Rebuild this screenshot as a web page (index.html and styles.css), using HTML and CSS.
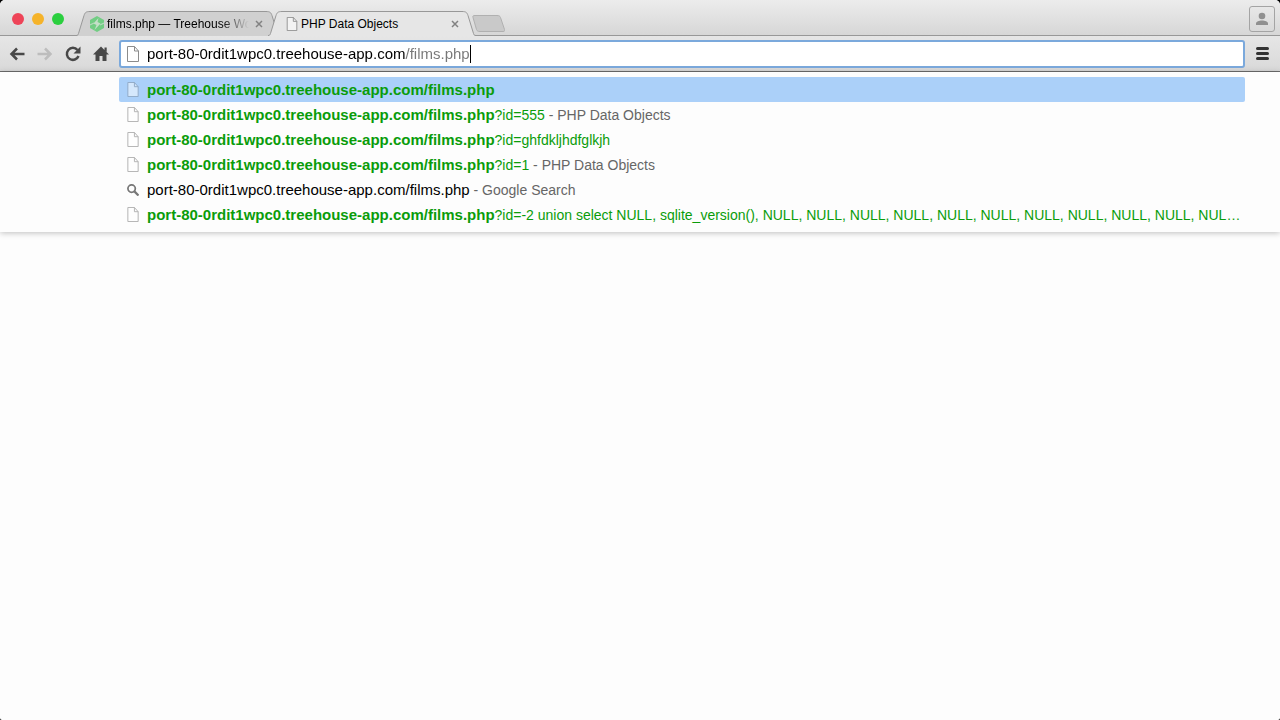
FILE: index.html
```html
<!DOCTYPE html>
<html lang="en">
<head>
  <meta charset="UTF-8" />
  <meta name="viewport" content="width=device-width, initial-scale=1.0"/>
  <title>PHP Data Objects</title>
  <link rel="stylesheet" href="styles.css">
</head>
<body>
  <!-- shared icons -->
  <svg class="sprite" aria-hidden="true">
    <symbol id="page" viewBox="0 0 12 16">
      <path d="M.5.5H7.500l4 4.500v10.500H.5z" fill="#fff" fill-opacity=".5" stroke="currentColor"/>
      <path d="M7.500.5v4.500H11.500" fill="none" stroke="currentColor"/>
    </symbol>
    <symbol id="close" viewBox="0 0 8 8">
      <path d="M1 1l6 6M7 1L1 7" stroke="currentColor" stroke-width="1.500"/>
    </symbol>
    <symbol id="edge-left" viewBox="0 0 14 25">
      <path d="M0 25C1.500 25 2 24 2.500 22.500L8 4.500C9 1.500 10 .5 14 .5V25z" fill="var(--tab-bg)"/>
      <path d="M0 24.500C1.500 24.500 2 24 2.500 22.500L8 4.500C9 1.500 10 .5 14 .5" fill="none" stroke="#989898"/>
    </symbol>
  </svg>

  <div class="window">
    <header class="tab-strip">
      <div class="lights">
        <button class="light red" aria-label="Close window"></button>
        <button class="light yellow" aria-label="Minimize window"></button>
        <button class="light green" aria-label="Zoom window"></button>
      </div>

      <nav class="tabs" aria-label="Tabs">
        <div class="tab">
          <svg class="edge"><use href="#edge-left"/></svg>
          <div class="tab-body">
            <svg class="logo" viewBox="0 0 14 16">
              <path d="M7 0l7 4v8l-7 4-7-4V4z" fill="#72cd84"/>
              <path d="M8.500 2L3.500 7.500 6.500 9l-2 5 6-6.500-3-1.500z" fill="#c4dfc8"/>
              <path d="M0 9l4-2M14 7l-4 2" stroke="#b5d9bb" stroke-width="1.200"/>
            </svg>
            <a class="tab-title fade" href="#">films.php — Treehouse Workspaces</a>
            <button class="tab-close" aria-label="Close tab"><svg><use href="#close"/></svg></button>
          </div>
          <svg class="edge right"><use href="#edge-left"/></svg>
        </div>
        <div class="tab active">
          <svg class="edge"><use href="#edge-left"/></svg>
          <div class="tab-body">
            <svg class="page-icon"><use href="#page"/></svg>
            <a class="tab-title" href="#" aria-current="page">PHP Data Objects</a>
            <button class="tab-close" aria-label="Close tab"><svg><use href="#close"/></svg></button>
          </div>
          <svg class="edge right"><use href="#edge-left"/></svg>
        </div>
        <button class="new-tab" aria-label="New tab">
          <svg viewBox="0 0 34 17"><path d="M4 .5h22c2 0 3 .5 3.500 2l4 12c.5 1.500 0 2-1.500 2H9c-2 0-3-.5-3.500-2l-3.500-12C1.500 1 2 .5 4 .5z" fill="#c9c9c9" stroke="#b0b0b0"/></svg>
        </button>
      </nav>

      <button class="profile" aria-label="Profile">
        <svg viewBox="0 0 14 14"><circle cx="7" cy="4" r="3.300"/><path d="M1 13v-1.500C1 9.500 4 8.500 7 8.500s6 1 6 3V13z"/></svg>
      </button>
    </header>

    <div class="toolbar">
      <button class="tool" aria-label="Back">
        <svg viewBox="0 0 16 16"><path d="M15.500 8H2.500M8 2.500L2.500 8 8 13.500" fill="none" stroke="#484848" stroke-width="2.500"/></svg>
      </button>
      <button class="tool" aria-label="Forward" disabled>
        <svg viewBox="0 0 16 16"><path d="M.5 8h13M8 2.500L13.500 8 8 13.500" fill="none" stroke="#bdbdbd" stroke-width="2.500"/></svg>
      </button>
      <button class="tool" aria-label="Reload">
        <svg viewBox="0 0 16 16"><path d="M12.500 4A6 6 0 1 0 13.500 10" fill="none" stroke="#484848" stroke-width="2.500"/><path d="M15.500.5v7H8.500z" fill="#484848"/></svg>
      </button>
      <button class="tool" aria-label="Home">
        <svg viewBox="0 0 16 16"><path d="M8 .5l8 8h-2.500V15H9.500v-5h-3v5h-4V8.500H0l8-8zM11.500 1.500h2.200V6l-2.200-2z" fill="#484848"/></svg>
      </button>

      <form class="omnibox">
        <svg class="page-icon"><use href="#page"/></svg>
        <input class="address" type="text" aria-label="Address" value="port-80-0rdit1wpc0.treehouse-app.com/films.php" spellcheck="false">
        <span class="caret"></span>
      </form>

      <button class="menu" aria-label="Menu">
        <svg viewBox="0 0 13 13"><path d="M1.500 1.500h10M1.500 6.500h10M1.500 11.500h10" stroke="#333" stroke-width="3" stroke-linecap="round"/></svg>
      </button>
    </div>

    <ul class="suggestions">
      <li><a class="row selected" href="#">
        <svg class="page-icon"><use href="#page"/></svg>
        <span class="text"><b>port-80-0rdit1wpc0.treehouse-app.com/films.php</b></span>
      </a></li>
      <li><a class="row" href="#">
        <svg class="page-icon"><use href="#page"/></svg>
        <span class="text"><b>port-80-0rdit1wpc0.treehouse-app.com/films.php</b>?id=555<span class="note"> - PHP Data Objects</span></span>
      </a></li>
      <li><a class="row" href="#">
        <svg class="page-icon"><use href="#page"/></svg>
        <span class="text"><b>port-80-0rdit1wpc0.treehouse-app.com/films.php</b>?id=ghfdkljhdfglkjh</span>
      </a></li>
      <li><a class="row" href="#">
        <svg class="page-icon"><use href="#page"/></svg>
        <span class="text"><b>port-80-0rdit1wpc0.treehouse-app.com/films.php</b>?id=1<span class="note"> - PHP Data Objects</span></span>
      </a></li>
      <li><a class="row" href="#">
        <svg class="search-icon" viewBox="0 0 13 13"><circle cx="5" cy="5" r="4" fill="none" stroke="#777" stroke-width="1.900"/><path d="M8 8l4.500 4.500" stroke="#777" stroke-width="2.400"/></svg>
        <span class="text"><span class="query">port-80-0rdit1wpc0.treehouse-app.com/films.php</span><span class="note"> - Google Search</span></span>
      </a></li>
      <li><a class="row" href="#">
        <svg class="page-icon"><use href="#page"/></svg>
        <span class="text"><b>port-80-0rdit1wpc0.treehouse-app.com/films.php</b>?id=-2 union select NULL, sqlite_version(), NULL, NULL, NULL, NULL, NULL, NULL, NULL, NULL, NULL, NULL, NULL, NULL, NULL</span>
      </a></li>
    </ul>

    <main class="content"></main>
  </div>
</body>
</html>
```
FILE: styles.css
```css
* {
  box-sizing: border-box;
}

body {
  margin: 0;
  background: #000;
  font-family: "Liberation Sans", Arial, sans-serif;
}

button {
  padding: 0;
  border: none;
  background: none;
}

svg {
  display: block;
}

a {
  color: inherit;
  text-decoration: none;
}

.sprite {
  position: absolute;
  width: 0;
  height: 0;
}

.window {
  display: flex;
  flex-direction: column;
  min-height: 100vh;
  background: #fdfdfd;
  border-radius: 5px 5px 2px 2px;
  overflow: hidden;
}

/* tab strip */
.tab-strip {
  display: flex;
  align-items: flex-end;
  height: 36px;
  padding: 0 5px 0 12px;
  background: linear-gradient(#ececec, #d6d6d6);
  box-shadow: inset 0 -1px #989898;
}

.lights {
  display: flex;
  gap: 8px;
  width: 64px;
  padding-bottom: 11px;
}

.light {
  width: 12px;
  height: 12px;
  border-radius: 50%;
}

.red { background: #ee4458; }
.yellow { background: #f5b32a; }
.green { background: #2bcf3f; }

.tabs {
  display: flex;
  flex: 1;
  align-items: flex-end;
}

.tab {
  --tab-bg: #d0d0d0;
  display: flex;
  width: 204px;
  height: 25px;
  font-size: 12px;
}

.tab.active {
  --tab-bg: #e6e6e6;
  position: relative;
  width: 208px;
  margin-left: -12px;
}

.active .tab-body {
  padding-left: 4px;
  border-bottom: 1px solid var(--tab-bg);
}

.edge {
  flex: none;
  width: 14px;
  height: 25px;
}

.edge.right {
  transform: scaleX(-1);
}

.tab-body {
  display: flex;
  flex: 1;
  align-items: center;
  gap: 3px;
  min-width: 0;
  border-top: 1px solid #989898;
  background: var(--tab-bg);
}

.logo {
  flex: none;
  width: 14px;
  height: 16px;
}

.tab-title {
  flex: 1;
  overflow: hidden;
  white-space: nowrap;
}

.fade {
  -webkit-mask-image: linear-gradient(to right, #000 80%, transparent);
  mask-image: linear-gradient(to right, #000 80%, transparent);
}

.tab-close {
  width: 14px;
  padding: 3px;
  color: #828282;
}

.tab-close svg {
  width: 8px;
  height: 8px;
}

.page-icon {
  flex: none;
  width: 12px;
  height: 16px;
  color: #8c8c8c;
}

.active .page-icon {
  height: 14px;
}

.new-tab {
  margin: 0 0 4px -5px;
}

.new-tab svg {
  width: 34px;
  height: 17px;
}

.profile {
  display: grid;
  place-items: center;
  width: 26px;
  height: 26px;
  margin-bottom: 4px;
  border: 1px solid #a4a4a4;
  border-radius: 3px;
}

.profile svg {
  width: 14px;
  height: 14px;
  fill: #909090;
}

/* toolbar */
.toolbar {
  display: flex;
  align-items: center;
  gap: 12px;
  height: 36px;
  padding: 0 11px 0 9px;
  border-bottom: 1px solid #6d6d6d;
  background: linear-gradient(#e6e6e6, #d9d9d9);
}

.tool svg {
  width: 16px;
  height: 16px;
}

.omnibox {
  display: flex;
  flex: 1;
  align-items: center;
  height: 28px;
  margin: 0 -1px 0 -2px;
  padding: 0 6px;
  border: 2px solid #7ba9dc;
  border-radius: 3px;
  background: #fff;
}

/* the path is greyed out, the host stays black */
.address {
  field-sizing: content;
  min-width: 0;
  margin-left: 8px;
  padding: 0;
  border: none;
  outline: none;
  background: linear-gradient(to right, #000 80%, #777 80%);
  -webkit-background-clip: text;
  background-clip: text;
  color: transparent;
  font: 15px/20px "Liberation Sans", Arial, sans-serif;
}

.caret {
  width: 1px;
  height: 18px;
  background: #000;
}

.menu svg {
  width: 13px;
  height: 13px;
}

/* suggestions */
.suggestions {
  margin: 0;
  padding: 5px 35px 5px 119px;
  list-style: none;
  background: #fdfdfd;
  box-shadow: 0 1px 6px rgba(0, 0, 0, 0.25);
}

.row {
  display: flex;
  align-items: center;
  gap: 8px;
  height: 25px;
  padding: 0 2px 0 8px;
  border-radius: 2px;
  color: #0a9c0a;
  font-size: 14px;
}

.row b,
.query {
  font-size: 15px;
}

.row .page-icon {
  height: 15px;
  color: #b0b0b0;
}

.selected {
  background: #abd0f9;
}

.selected .page-icon {
  color: #8fa9c5;
}

.search-icon {
  flex: none;
  width: 12px;
  height: 12px;
}

.text {
  overflow: hidden;
  text-overflow: ellipsis;
  white-space: nowrap;
}

.note {
  color: #666;
}

.query {
  color: #000;
}

.content {
  flex: 1;
}
```
